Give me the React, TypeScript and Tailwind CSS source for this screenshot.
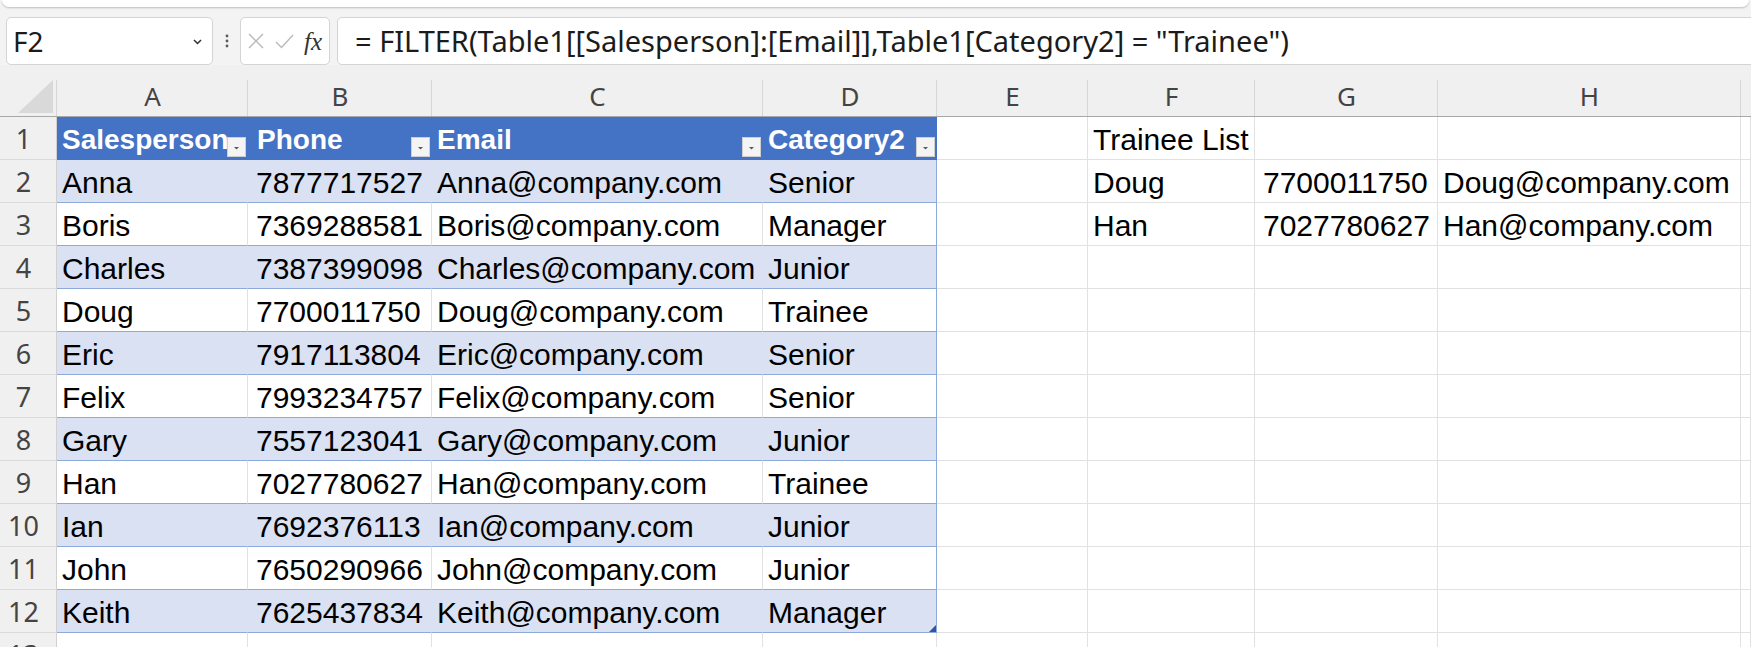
import React from "react";

const COLW = [
  "w-[191px]",
  "w-[184px]",
  "w-[331px]",
  "w-[174px]",
  "w-[151px]",
  "w-[167px]",
  "w-[183px]",
  "w-[303px]",
  "w-[10px]",
];
const LETTERS = ["A", "B", "C", "D", "E", "F", "G", "H", ""];

type Row = string[];
const DATA: Row[] = [
  ["Salesperson", "Phone", "Email", "Category2", "", "Trainee List", "", "", ""],
  ["Anna", "7877717527", "Anna@company.com", "Senior", "", "Doug", "7700011750", "Doug@company.com", ""],
  ["Boris", "7369288581", "Boris@company.com", "Manager", "", "Han", "7027780627", "Han@company.com", ""],
  ["Charles", "7387399098", "Charles@company.com", "Junior", "", "", "", "", ""],
  ["Doug", "7700011750", "Doug@company.com", "Trainee", "", "", "", "", ""],
  ["Eric", "7917113804", "Eric@company.com", "Senior", "", "", "", "", ""],
  ["Felix", "7993234757", "Felix@company.com", "Senior", "", "", "", "", ""],
  ["Gary", "7557123041", "Gary@company.com", "Junior", "", "", "", "", ""],
  ["Han", "7027780627", "Han@company.com", "Trainee", "", "", "", "", ""],
  ["Ian", "7692376113", "Ian@company.com", "Junior", "", "", "", "", ""],
  ["John", "7650290966", "John@company.com", "Junior", "", "", "", "", ""],
  ["Keith", "7625437834", "Keith@company.com", "Manager", "", "", "", "", ""],
  ["", "", "", "", "", "", "", "", ""],
];

const UI = "font-['Noto_Sans','Open_Sans',sans-serif]";
const CELLF = "font-['Liberation_Sans',Arial,sans-serif]";

function FilterButton() {
  return (
    <div className="absolute right-[1px] bottom-[2px] w-[19px] h-[20px] bg-[#f4f4f4] border border-[#cfcfcf] flex items-center justify-center">
      <svg width="17" height="18" viewBox="0 0 17 18">
        <polygon points="6,9 11,9 8.5,11.5" fill="#595959" />
      </svg>
    </div>
  );
}

function cellClasses(r: number, c: number): string {
  const inTable = r <= 11 && c <= 3;
  const isHeader = r === 0 && c <= 3;
  const banded = inTable && r >= 1 && r % 2 === 1;
  const lastCol = c === 3;
  if (isHeader) {
    return "bg-[#4472C4] text-white font-bold text-[28px] pt-[4px] leading-[38px] border-b border-r border-b-[#4472C4] border-r-[#4472C4]";
  }
  if (banded) {
    return (
      "bg-[#D9E1F2] text-black text-[30px] pt-[3px] leading-[39px] border-b border-r border-b-[#8EA9DB] " +
      (lastCol ? "border-r-[#8EA9DB]" : "border-r-[#D9E1F2]")
    );
  }
  if (inTable) {
    return (
      "bg-white text-black text-[30px] pt-[3px] leading-[39px] border-b border-r border-b-[#8EA9DB] " +
      (lastCol ? "border-r-[#8EA9DB]" : "border-r-[#e1e1e1]")
    );
  }
  return "bg-white text-black text-[30px] pt-[3px] leading-[39px] border-b border-r border-b-[#e1e1e1] border-r-[#e1e1e1]";
}

function padFor(r: number, c: number): string {
  if (r === 0 && c === 1) return "pl-[9px]";
  if (c === 1 || c === 6) return "pl-[8px]";
  return "pl-[5px]";
}

export default function App() {
  return (
    <div className="w-[1751px] h-[647px] overflow-hidden bg-white relative">
      {/* ribbon bottom edge + formula bar area */}
      <div className="bg-[#f3f3f3] pb-0">
        <div className="h-[7px] mx-[2px] bg-white rounded-b-[7px] shadow-[0_1px_2px_rgba(0,0,0,0.22)]" />
        <div className="h-[10px]" />
        <div className={`flex h-[48px] ${UI}`}>
          {/* name box */}
          <div className="ml-[6px] w-[207px] h-full bg-white border border-[#d4d4d4] rounded-[5px] flex items-center pl-[6px] pr-[10px]">
            <span className="text-[28px] text-[#1b1b1b] flex-1">F2</span>
            <svg width="9" height="6" viewBox="0 0 9 6" className="mt-[2px]">
              <polyline points="1,1 4.5,4.5 8,1" fill="none" stroke="#303030" strokeWidth="1.5" />
            </svg>
          </div>
          {/* dots */}
          <div className="w-[27px] flex items-center justify-center">
            <svg width="4" height="14" viewBox="0 0 4 14">
              <circle cx="2" cy="2" r="1.4" fill="#5a5a5a" />
              <circle cx="2" cy="7" r="1.4" fill="#5a5a5a" />
              <circle cx="2" cy="12" r="1.4" fill="#5a5a5a" />
            </svg>
          </div>
          {/* fx box */}
          <div className="w-[90px] h-full bg-white border border-[#d4d4d4] rounded-[5px] flex items-center pl-[7px] gap-[11px]">
            <svg width="16" height="16" viewBox="0 0 16 16">
              <line x1="1" y1="1" x2="15" y2="15" stroke="#b9b9b9" strokeWidth="1.4" />
              <line x1="15" y1="1" x2="1" y2="15" stroke="#b9b9b9" strokeWidth="1.4" />
            </svg>
            <svg width="19" height="16" viewBox="0 0 19 16">
              <polyline points="1,9 6.5,14.5 18,2" fill="none" stroke="#b9b9b9" strokeWidth="1.4" />
            </svg>
            <span className="font-['Liberation_Serif',serif] italic text-[25px] text-[#333] leading-none -ml-[1px]">
              fx
            </span>
          </div>
          {/* formula */}
          <div className="ml-[7px] flex-1 -mr-[10px] h-full bg-white border border-[#d4d4d4] rounded-[5px] flex items-center pl-[17px]">
            <span className="text-[29px] text-[#1b1b1b] whitespace-nowrap">
              = FILTER(Table1[[Salesperson]:[Email]],Table1[Category2] = "Trainee")
            </span>
          </div>
        </div>
      </div>

      {/* column header row */}
      <div className={`flex h-[52px] bg-[#f0f0f0] border-b border-[#a8a8a8] ${UI}`}>
        <div className="w-[57px] h-full relative shrink-0">
          <svg width="57" height="51" viewBox="0 0 57 51" className="absolute left-0 top-0">
            <polygon points="18,48 53,48 53,15" fill="#d9d9d9" />
          </svg>
        </div>
        {LETTERS.map((l, i) => (
          <div
            key={i}
            className={`${COLW[i]} shrink-0 h-full relative text-center text-[26px] text-[#444] pt-[12px] leading-[39px]`}
          >
            <div className="absolute left-[-1px] top-[15px] bottom-0 w-px bg-[#d6d6d6]" />
            {l}
          </div>
        ))}
      </div>

      {/* rows */}
      {DATA.map((row, r) => (
        <div key={r} className="flex h-[43px]">
          <div
            className={`w-[57px] shrink-0 h-full bg-[#f0f0f0] border-b border-r border-b-[#dadada] border-r-[#d0d0d0] text-center pr-[9px] pt-[2px] leading-[40px] text-[27px] text-[#444] ${UI}`}
          >
            {r + 1}
          </div>
          {row.map((v, c) => (
            <div
              key={c}
              className={`${COLW[c]} shrink-0 h-full relative whitespace-nowrap ${CELLF} ${cellClasses(r, c)} ${padFor(r, c)}`}
            >
              {v}
              {r === 0 && c <= 3 && <FilterButton />}
              {r === 11 && c === 3 && (
                <svg width="7" height="7" viewBox="0 0 7 7" className="absolute right-[0px] bottom-[0px]">
                  <polygon points="7,0 7,7 0,7" fill="#2f54a3" />
                </svg>
              )}
            </div>
          ))}
        </div>
      ))}
    </div>
  );
}
